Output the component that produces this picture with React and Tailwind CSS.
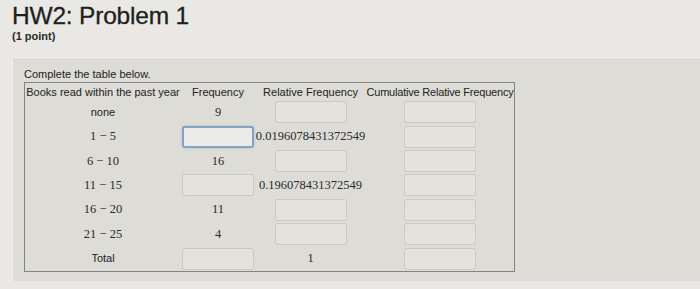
// Homework problem card: a frequency table with blank answer boxes.

const rows = [
  { label: "none", sans: true, freq: "9", rel: null },
  { label: "1 − 5", freq: null, rel: "0.0196078431372549", focused: true },
  { label: "6 − 10", freq: "16", rel: null },
  { label: "11 − 15", freq: null, rel: "0.196078431372549" },
  { label: "16 − 20", freq: "11", rel: null },
  { label: "21 − 25", freq: "4", rel: null },
  { label: "Total", sans: true, freq: null, rel: "1" },
];

const serif = "font-['Liberation_Serif',serif] text-[12.5px] text-[#2a2a2a]";

function AnswerBox({ focused }) {
  return (
    <div
      className={
        focused
          ? "h-[22px] w-[72px] rounded-[3px] border-2 border-[#86a4c2] bg-[#ebebea] shadow-[0_0_2px_#9db6cf]"
          : "h-[22px] w-[72px] rounded-[3px] border border-[#cbc9c3] bg-[#e3e2dd]"
      }
    />
  );
}

export default function App() {
  return (
    <div className="h-[289px] w-[700px] overflow-hidden bg-[#e9e8e4] font-['Liberation_Sans',Arial,sans-serif] text-[#222]">
      <div className="pl-[12px] pt-[2px]">
        <h1 className="text-[24.5px] leading-[28px] tracking-[-0.2px] text-[#1e1e1e] [-webkit-text-stroke:0.3px_#1e1e1e]">
          HW2: Problem 1
        </h1>
        <p className="text-[11px] font-bold leading-[12px] text-[#2a2a2a]">(1 point)</p>
      </div>

      <div className="ml-[12px] mt-[15px] h-[224px] border-t border-l border-[#f1f0ec] bg-[#dddcd7] pl-[11px] pt-[9px]">
        <p className="text-[11px] leading-[14px]">Complete the table below.</p>

        <div className="mt-[1px] w-[491px] border border-[#838383]">
          <div className="grid h-[17px] grid-cols-[156px_74px_111px_148px] items-center justify-items-center whitespace-nowrap text-[11px] leading-[14px]">
            <span>Books read within the past year</span>
            <span>Frequency</span>
            <span>Relative Frequency</span>
            <span className="tracking-[-0.2px]">Cumulative Relative Frequency</span>
          </div>

          {rows.map((r) => (
            <div
              key={r.label}
              className="grid h-[24.4px] grid-cols-[156px_74px_111px_148px] items-center justify-items-center"
            >
              <span className={r.sans ? "text-[11px]" : serif}>{r.label}</span>
              {r.freq ? <span className={serif}>{r.freq}</span> : <AnswerBox focused={r.focused} />}
              {r.rel ? (
                <span className={`${serif} whitespace-nowrap`}>{r.rel}</span>
              ) : (
                <AnswerBox />
              )}
              <AnswerBox />
            </div>
          ))}
        </div>
      </div>
    </div>
  );
}
